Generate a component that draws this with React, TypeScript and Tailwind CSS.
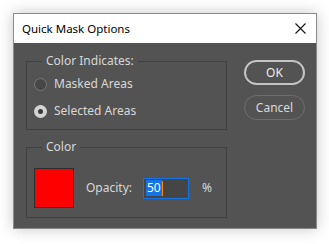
import React from 'react';

const font = { fontFamily: '"Noto Sans", "Open Sans", sans-serif' };

const Radio = ({ checked, label }: { checked?: boolean; label: string }) => (
  <label className="flex items-center h-[20px] gap-[7px]">
    {checked ? (
      <span className="w-[13px] h-[13px] rounded-full bg-[#d4d4d4] flex items-center justify-center">
        <span className="w-[5px] h-[5px] rounded-full bg-[#3a3a3a]" />
      </span>
    ) : (
      <span className="w-[13px] h-[13px] rounded-full border border-[#787878] bg-[#474747]" />
    )}
    <span>{label}</span>
  </label>
);

const App = () => {
  return (
    <div className="w-[329px] h-[244px] bg-white pt-[13px] pl-[13px]" style={font}>
      <div className="w-[304px] h-[216px] border border-[#8a8a8a] flex flex-col shadow-[0_0_14px_rgba(0,0,0,0.22)]">
        <div className="h-[29px] bg-white flex items-center justify-between pl-[8px] pr-[9px] text-[11.5px] text-black">
          <span>Quick Mask Options</span>
          <svg width="11" height="11" viewBox="0 0 11 11" className="mr-[1px]">
            <path d="M0.5 0.5 L10.5 10.5 M10.5 0.5 L0.5 10.5" stroke="#111" strokeWidth="1.1" />
          </svg>
        </div>
        <div className="flex-1 bg-[#535353] flex pl-[12px] pt-[9px] gap-[17px] text-[12px] text-[#d8d8d8]">
          <div className="flex flex-col gap-[8px] w-[201px]">
            <fieldset className="border border-[#404040] px-[7px] pb-[8px] pt-[4px]">
              <legend className="ml-[8px] px-[4px] leading-[18px]">Color Indicates:</legend>
              <div className="flex flex-col gap-[7px]">
                <Radio label="Masked Areas" />
                <Radio checked label="Selected Areas" />
              </div>
            </fieldset>
            <fieldset className="border border-[#404040] px-[7px] pb-[9px] pt-[12px]">
              <legend className="ml-[8px] px-[4px] leading-[18px]">Color</legend>
              <div className="flex items-center">
                <div className="w-[40px] h-[40px] bg-[#ff0000] border border-[#2e2e2e]" />
                <span className="ml-[12px] w-[57px]">Opacity:</span>
                <div className="w-[46px] h-[21px] border border-[#1473e6] bg-[#454545] flex items-center pl-[2px]">
                  <span className="bg-[#1473e6] text-white leading-[16px] px-[1px]">50</span>
                  <span className="w-[1px] h-[15px] bg-[#ff8a00]" />
                </div>
                <span className="ml-[13px]">%</span>
              </div>
            </fieldset>
          </div>
          <div className="flex flex-col gap-[10px] mt-[8px] w-[61px]">
            <button className="h-[25px] rounded-full border-2 border-[#c4c4c4] text-[#ececec] leading-none">OK</button>
            <button className="h-[25px] rounded-full border border-[#6e6e6e] text-[#dadada] leading-none">Cancel</button>
          </div>
        </div>
      </div>
    </div>
  );
};

export default App;
